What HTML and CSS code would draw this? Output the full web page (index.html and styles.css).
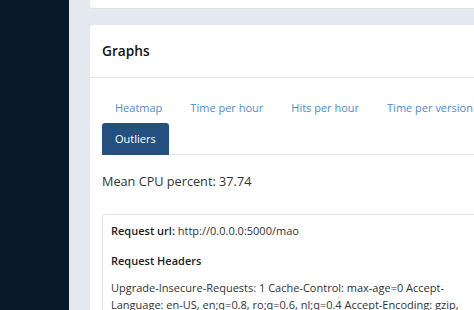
FILE: index.html
```html
<!DOCTYPE html>
<html>
<head>
<meta charset="utf-8">
<link rel="stylesheet" href="styles.css">
</head>
<body>
<div class="layout">
  <aside class="sidebar"></aside>
  <main class="main">
    <div class="card card-top"></div>
    <div class="card">
      <div class="card-header">Graphs</div>
      <div class="card-body">
        <ul class="tabs">
          <li><a class="tab">Heatmap</a></li>
          <li><a class="tab">Time per hour</a></li>
          <li><a class="tab">Hits per hour</a></li>
          <li><a class="tab">Time per version</a></li>
          <li><a class="tab active">Outliers</a></li>
        </ul>
        <p class="mean">Mean CPU percent: 37.74</p>
        <div class="request">
          <p><b>Request url:</b> http://0.0.0.0:5000/mao</p>
          <p class="sub"><b>Request Headers</b></p>
          <p class="headers">Upgrade-Insecure-Requests: 1 Cache-Control: max-age=0 Accept-Language: en-US, en;q=0.8, ro;q=0.6, nl;q=0.4 Accept-Encoding: gzip, deflate User-Agent: Mozilla/5.0</p>
        </div>
      </div>
    </div>
  </main>
</div>
</body>
</html>
```
FILE: styles.css
```css
html, body {
  margin: 0;
  padding: 0;
  height: 100%;
  overflow: hidden;
}
body {
  font-family: "Open Sans", "Liberation Sans", sans-serif;
  font-size: 11px;
  line-height: 1.5;
  color: #333;
  background: #e4e9ef;
}
.layout {
  display: flex;
  height: 100%;
}
.sidebar {
  width: 69px;
  flex: none;
  background: #0b1a2a;
}
.main {
  flex: 1;
  padding: 0 0 0 21px;
  display: flex;
  flex-direction: column;
  gap: 17px;
  min-width: 0;
}
.card {
  flex: none;
  background: #fff;
  border-radius: 3px 0 0 3px;
  width: 414px;
}
.card-top {
  height: 8px;
  border-radius: 0 0 0 3px;
  box-shadow: 0 1px 1px rgba(0,0,0,0.04);
}
.card-header {
  height: 53px;
  box-sizing: border-box;
  padding: 0 12px;
  display: flex;
  align-items: center;
  font-size: 13.7px;
  font-weight: 600;
  color: #111;
  border-bottom: 1px solid #e3e6ea;
}
.card-body {
  padding: 14px 12px 0 12px;
}
.tabs {
  list-style: none;
  margin: 0;
  padding: 0;
  display: flex;
  flex-wrap: wrap;
  gap: 0 2px;
  border-bottom: 1px solid #e1e5ea;
}
.tab {
  display: block;
  padding: 6px 13px;
  line-height: 20px;
  color: #4b8ecb;
  border-radius: 3px 3px 0 0;
  margin-bottom: -1px;
}
.tab.active {
  background: #24507f;
  color: #fff;
}
.mean {
  margin: 17px 0 0;
  font-size: 12.7px;
  line-height: 19px;
}
.request {
  margin-top: 23px;
  border: 1px solid #e1e5ea;
  border-radius: 3px 3px 0 0;
  padding: 8px 8px;
}
.request p {
  margin: 0 0 13px;
  line-height: 16.5px;
}
.request p.sub {
  margin-bottom: 11px;
}
.request b {
  font-weight: 600;
  color: #222;
}
```
